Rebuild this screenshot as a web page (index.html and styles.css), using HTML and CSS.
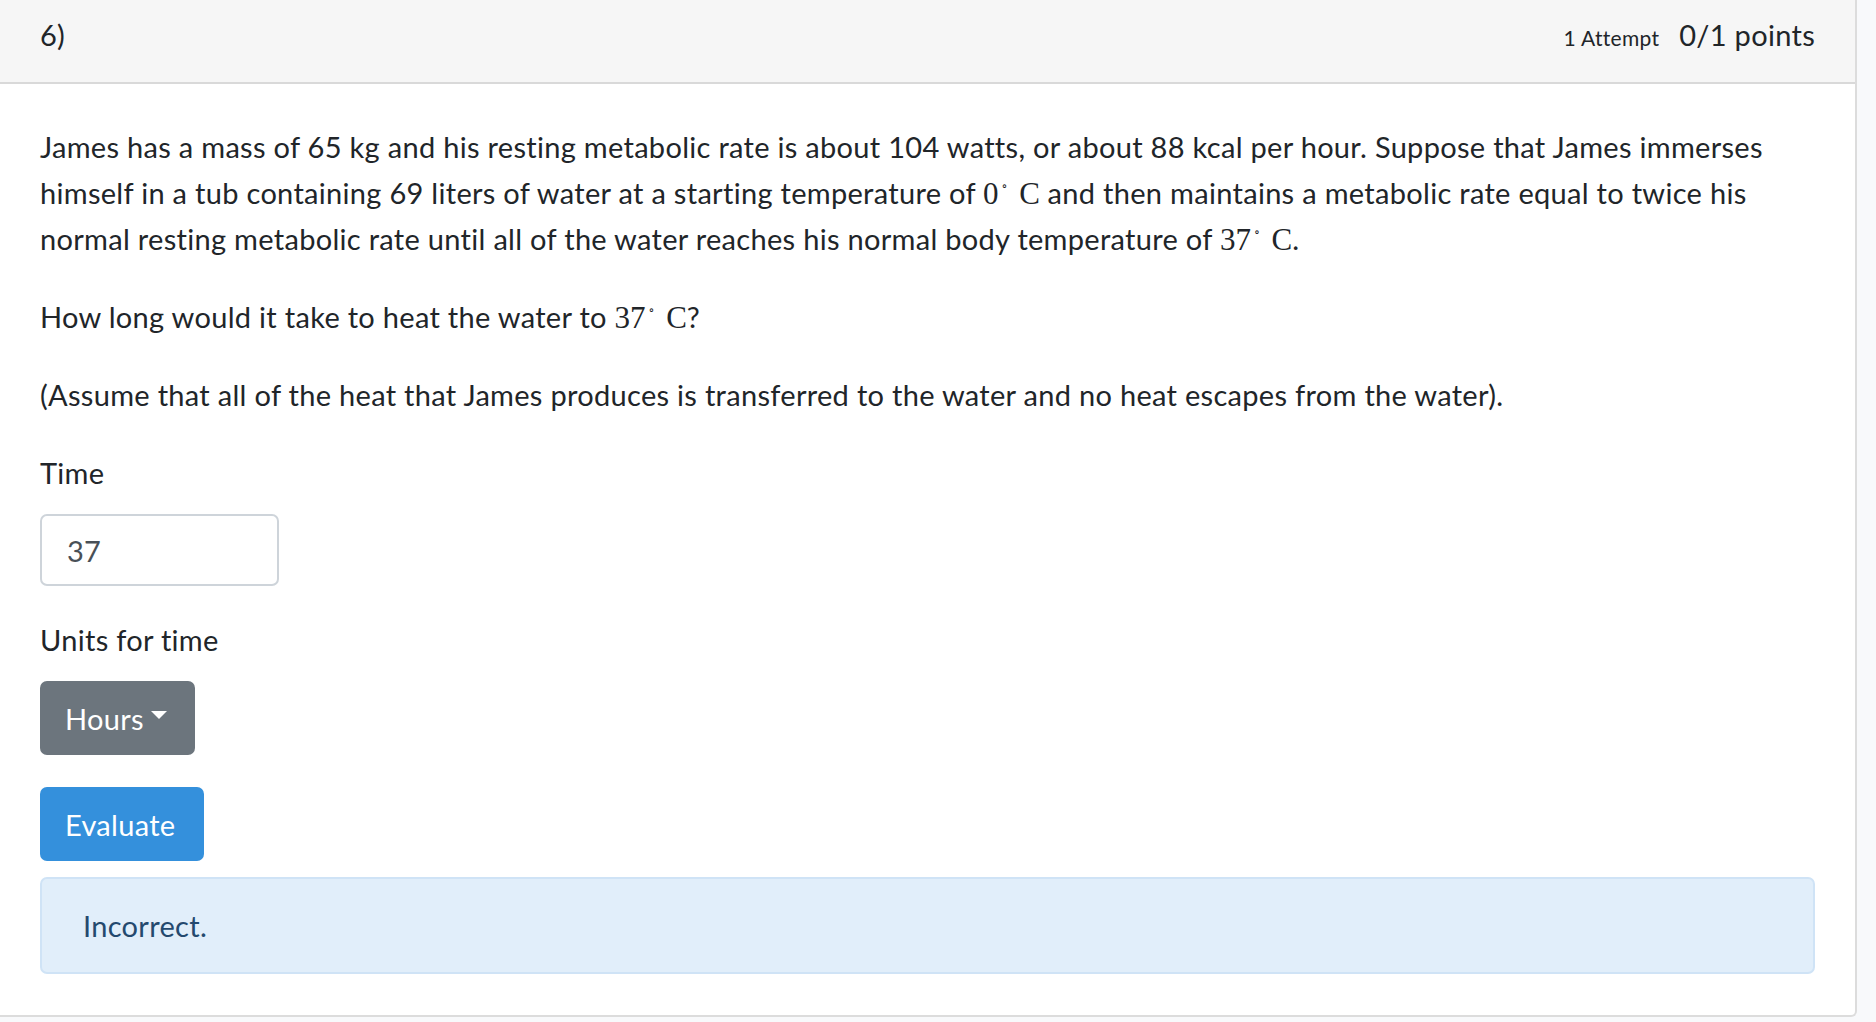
FILE: index.html
```html
<!DOCTYPE html>
<html>
<head>
<meta charset="utf-8">
<link rel="stylesheet" href="styles.css">
</head>
<body>
<div class="card">
  <div class="card-header">
    <span class="qnum">6)</span>
    <div class="score">
      <span class="attempts">1 Attempt</span>
      <span class="points">0/1 points</span>
    </div>
  </div>
  <div class="card-body">
    <p>James has a mass of 65 kg and his resting metabolic rate is about 104 watts, or about 88 kcal per hour. Suppose that James immerses himself in a tub containing 69 liters of water at a starting temperature of <span class="math">0<sup>∘</sup>&nbsp;C</span> and then maintains a metabolic rate equal to twice his normal resting metabolic rate until all of the water reaches his normal body temperature of <span class="math">37<sup>∘</sup>&nbsp;C</span>.</p>
    <p>How long would it take to heat the water to <span class="math">37<sup>∘</sup>&nbsp;C</span>?</p>
    <p>(Assume that all of the heat that James produces is transferred to the water and no heat escapes from the water).</p>
    <label class="label">Time</label>
    <div class="input">37</div>
    <label class="label">Units for time</label>
    <div class="btn btn-secondary">Hours<span class="caret"></span></div>
    <div class="btn btn-primary">Evaluate</div>
    <div class="alert">Incorrect.</div>
  </div>
</div>
</body>
</html>
```

FILE: styles.css
```css
html, body {
  margin: 0;
  padding: 0;
  background: #f8f9fb;
}
body {
  font-family: "Lato", "Noto Sans", sans-serif;
  color: #212529;
  font-size: 29px;
  letter-spacing: 0.3px;
  height: 1022px;
  overflow: hidden;
}
.card {
  width: 1855px;
  background: #fff;
  border-right: 2px solid #dcdcdc;
  border-bottom: 2px solid #dcdcdc;
  border-bottom-right-radius: 6px;
}
.card-header {
  height: 82px;
  background: #f6f6f6;
  border-bottom: 2px solid #d9d9d9;
  display: flex;
  align-items: center;
  justify-content: space-between;
  padding: 0 40px;
}
.qnum {
  font-size: 29px;
  margin-top: -14px;
}
.score {
  display: flex;
  align-items: baseline;
  gap: 20px;
  margin-top: -14px;
}
.attempts {
  font-size: 21px;
}
.points {
  font-size: 29px;
}
.card-body {
  padding: 40px 40px 41px 40px;
}
p {
  margin: 0 0 32px 0;
  line-height: 46px;
}
.math {
  font-family: "Liberation Serif", "DejaVu Serif", serif;
  font-size: 31px;
  line-height: 1;
  letter-spacing: 0;
}
.math sup {
  font-size: 12px;
  line-height: 1;
  vertical-align: 14px;
  margin-left: 3px;
  margin-right: 4px;
}
.label {
  display: block;
  line-height: 46px;
  margin-bottom: 18px;
}
.input {
  width: 239px;
  height: 72px;
  border: 2px solid #ced4da;
  border-radius: 7px;
  display: flex;
  align-items: center;
  padding-left: 25px;
  box-sizing: border-box;
  color: #495057;
  margin-bottom: 31px;
}
.btn {
  display: flex;
  align-items: center;
  height: 74px;
  padding: 0 25px;
  border-radius: 7px;
  color: #fff;
  box-sizing: border-box;
}
.btn-secondary {
  background: #6c757d;
  margin-top: 17px;
  margin-bottom: 32px;
  width: 155px;
}
.btn-primary {
  background: #3490dc;
  margin-bottom: 16px;
  width: 164px;
}
.caret {
  display: inline-block;
  width: 0;
  height: 0;
  border-left: 8px solid transparent;
  border-right: 8px solid transparent;
  border-top: 8px solid #fff;
  margin-left: 7px;
  margin-top: -6px;
}
.alert {
  height: 97px;
  box-sizing: border-box;
  background: #e1eefa;
  border: 2px solid #cfe3f6;
  border-radius: 7px;
  color: #24496e;
  display: flex;
  align-items: center;
  padding-left: 41px;
  width: 1775px;
}
```
